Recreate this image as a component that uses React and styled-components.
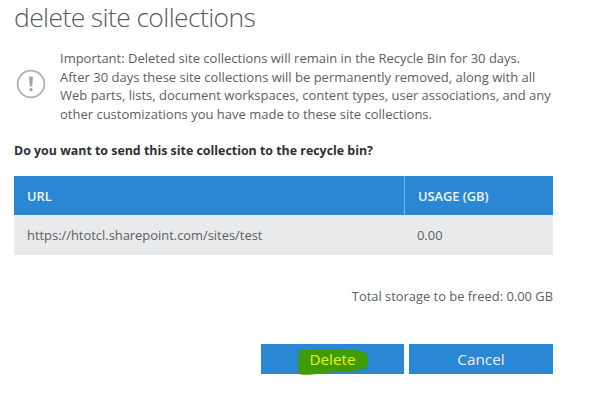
import React from "react";
import styled, { createGlobalStyle } from "styled-components";

const Global = createGlobalStyle`
  html, body { margin: 0; padding: 0; background: #fff; }
  body { font-family: "Open Sans", "Noto Sans", sans-serif; width: 601px; height: 406px; overflow: hidden; }
`;
const Page = styled.main`
  width: 539px;
  margin-left: 14px;
  display: flex;
  flex-direction: column;
`;
const Title = styled.h1`
  margin: -2px 0 0;
  height: 38px;
  font-size: 26.5px;
  line-height: 38px;
  font-weight: 300;
  color: #565b5f;
  letter-spacing: -0.62px;
`;
const Notice = styled.section`
  margin-top: 13px;
  display: flex;
  align-items: center;
  gap: 14px;
  padding-left: 2px;
`;
const NoticeIcon = styled.svg`
  flex-shrink: 0;
  margin-bottom: 5px;
`;
const NoticeText = styled.p`
  margin: 0;
  font-size: 13px;
  line-height: 18.5px;
  color: #5a5f63;
  white-space: nowrap;
`;
const Question = styled.h2`
  margin: 19px 0 0;
  font-size: 12.4px;
  line-height: 18px;
  font-weight: 700;
  color: #2e3033;
`;
const Table = styled.div`
  margin-top: 16px;
  display: grid;
  grid-template-columns: 390px 149px;
`;
const HeadCell = styled.div`
  height: 39px;
  background: #2a87d3;
  color: #eef6fc;
  font-size: 12.8px;
  font-weight: 600;
  display: flex;
  align-items: center;
  padding-left: 13px;
  box-sizing: border-box;
  ${(p) => p.$divided && "border-left: 1px solid #7db7e6;"}
`;
const BodyCell = styled.div`
  height: 40px;
  background: #e9eaec;
  color: #5a5f63;
  font-size: 12.9px;
  display: flex;
  align-items: center;
  padding-left: 13px;
  box-sizing: border-box;
`;
const Total = styled.p`
  margin: 32px 0 0;
  font-size: 12.9px;
  line-height: 18px;
  color: #5a5f63;
  text-align: right;
`;
const Actions = styled.div`
  margin-top: 39px;
  display: flex;
  justify-content: flex-end;
  gap: 5px;
`;
const Button = styled.button`
  position: relative;
  width: ${(p) => p.$width}px;
  height: 30px;
  padding: 0;
  border: 0;
  background: #2a87d3;
  color: #e6f2fb;
  font: 400 15.3px "Open Sans", sans-serif;
`;
const Highlight = styled.svg`
  position: absolute;
  left: 37px;
  top: 4px;
`;
const Label = styled.span`
  position: relative;
  color: ${(p) => p.$color || "inherit"};
`;

const WarningIcon = () => (
  <NoticeIcon width="30" height="30" viewBox="0 0 30 30" aria-hidden="true">
    <circle cx="15" cy="15" r="13.4" fill="none" stroke="#adb2b3" strokeWidth="1.8" />
    <path d="M13 8.2c0-.8 4-.8 4 0l-.8 9.3h-2.4z" fill="#a2a6a9" />
    <circle cx="15" cy="20.8" r="1.7" fill="#a2a6a9" />
  </NoticeIcon>
);

export default function App() {
  return (
    <>
      <Global />
      <Page>
        <Title>delete site collections</Title>
        <Notice>
          <WarningIcon />
          <NoticeText>
            Important: Deleted site collections will remain in the Recycle Bin for 30 days.
            <br />
            After 30 days these site collections will be permanently removed, along with all
            <br />
            Web parts, lists, document workspaces, content types, user associations, and any
            <br />
            other customizations you have made to these site collections.
          </NoticeText>
        </Notice>
        <Question>Do you want to send this site collection to the recycle bin?</Question>
        <Table>
          <HeadCell>URL</HeadCell>
          <HeadCell $divided>USAGE (GB)</HeadCell>
          <BodyCell>https://htotcl.sharepoint.com/sites/test</BodyCell>
          <BodyCell>0.00</BodyCell>
        </Table>
        <Total>Total storage to be freed: 0.00 GB</Total>
        <Actions>
          <Button $width={143}>
            <Highlight width="71" height="27" viewBox="0 0 71 27" aria-hidden="true">
              <path d="M2 2C18 1 50 1 64 3c4 1 6 4 6 9 0 6-2 9-7 10-15 2-34 2-44 4-6 1-16 1-18 0C0 20 0 8 2 2z" fill="#3f9b06" />
            </Highlight>
            <Label $color="#e4f50f">Delete</Label>
          </Button>
          <Button $width={144}>
            <Label>Cancel</Label>
          </Button>
        </Actions>
      </Page>
    </>
  );
}
